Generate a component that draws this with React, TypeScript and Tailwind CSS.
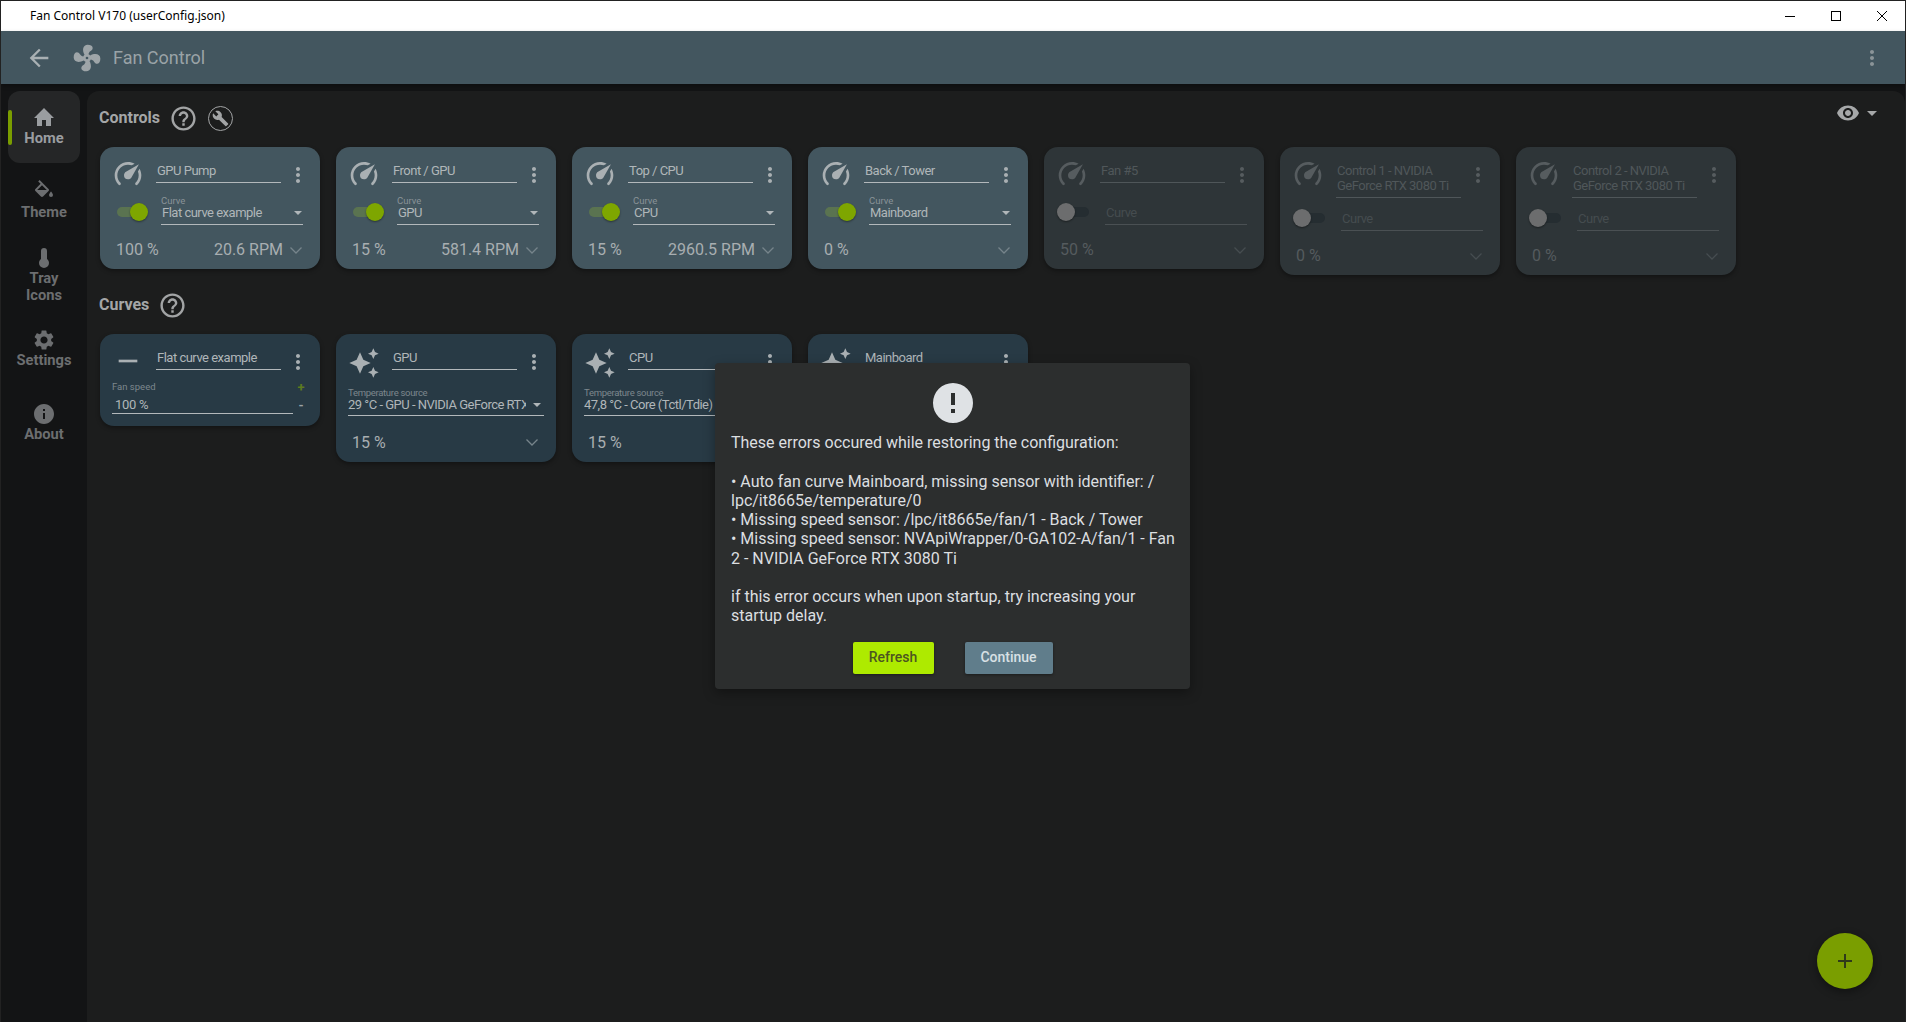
import React from 'react';
import { MdMoreVert, MdHelpOutline, MdVisibility, MdArrowBack, MdSettings, MdInfo, MdAdd } from 'react-icons/md';

const Mdi: React.FC<{ d: string; className?: string }> = ({ d, className }) => (
  <svg viewBox="0 0 24 24" fill="currentColor" className={className}>
    <path d={d} />
  </svg>
);

const GAUGE = 'M12,16A3,3 0 0,1 9,13C9,11.88 9.61,10.9 10.5,10.39L20.21,4.77L14.68,14.35C14.18,15.33 13.17,16 12,16M12,3C13.81,3 15.5,3.5 16.97,4.32L14.87,5.53C14,5.19 13,5 12,5A8,8 0 0,0 4,13C4,15.21 4.89,17.21 6.34,18.65H6.35C6.74,19.04 6.74,19.67 6.35,20.06C5.96,20.45 5.32,20.45 4.93,20.07V20.07C3.12,18.26 2,15.76 2,13A10,10 0 0,1 12,3M22,13C22,15.76 20.88,18.26 19.07,20.07V20.07C18.68,20.45 18.05,20.45 17.66,20.06C17.27,19.67 17.27,19.04 17.66,18.65V18.65C19.11,17.2 20,15.21 20,13C20,12 19.81,11 19.46,10.1L20.67,8C21.5,9.5 22,11.18 22,13Z';
const FAN = 'M12,11A1,1 0 0,0 11,12A1,1 0 0,0 12,13A1,1 0 0,0 13,12A1,1 0 0,0 12,11M12.5,2C17,2 17.11,5.57 14.75,6.75C13.76,7.24 13.32,8.29 13.13,9.22C13.61,9.42 14.03,9.73 14.35,10.13C18.05,8.13 22.03,8.92 22.03,12.5C22.03,17 18.46,17.1 17.28,14.73C16.78,13.74 15.72,13.3 14.79,13.11C14.59,13.59 14.28,14 13.88,14.34C15.87,18.03 15.08,22 11.5,22C7,22 6.91,18.42 9.27,17.24C10.25,16.75 10.69,15.71 10.89,14.79C10.4,14.59 9.97,14.27 9.65,13.87C5.96,15.85 2,15.07 2,11.5C2,7 5.56,6.89 6.74,9.26C7.24,10.25 8.29,10.68 9.22,10.87C9.41,10.39 9.73,9.97 10.14,9.65C8.15,5.96 8.94,2 12.5,2Z';
const SPARKLES = 'M19,1L17.74,3.75L15,5L17.74,6.26L19,9L20.25,6.26L23,5L20.25,3.75M9,4L6.5,9.5L1,12L6.5,14.5L9,20L11.5,14.5L17,12L11.5,9.5M19,15L17.74,17.74L15,19L17.74,20.25L19,23L20.25,20.25L23,19L20.25,17.74';
const HOME = 'M10,20V14H14V20H19V12H22L12,2L2,12H5V20H10Z';
const BUCKET = 'M19,11.5C19,11.5 17,13.67 17,15A2,2 0 0,0 19,17A2,2 0 0,0 21,15C21,13.67 19,11.5 19,11.5M5.21,10L10,5.21L14.79,10M16.56,8.94L7.62,0L6.21,1.41L8.59,3.79L3.44,8.94C2.85,9.5 2.85,10.47 3.44,11.06L8.94,16.56C9.23,16.85 9.62,17 10,17C10.38,17 10.77,16.85 11.06,16.56L16.56,11.06C17.15,10.47 17.15,9.5 16.56,8.94Z';
const THERMO = 'M17 17A5 5 0 0 1 7 17C7 15.36 7.79 13.91 9 13V5A3 3 0 0 1 15 5V13C16.21 13.91 17 15.36 17 17Z';
const WRENCH = 'M22.7,19L13.6,9.9C14.5,7.6 14,4.9 12.1,3C10.1,1 7.1,0.6 4.7,1.7L9,6L6,9L1.6,4.7C0.4,7.1 0.9,10.1 2.9,12.1C4.8,14 7.5,14.5 9.8,13.6L18.9,22.7C19.3,23.1 19.9,23.1 20.3,22.7L22.6,20.4C23.1,20 23.1,19.3 22.7,19Z';
const ALERT = 'M13,13H11V7H13M13,17H11V15H13M12,2A10,10 0 0,0 2,12A10,10 0 0,0 12,22A10,10 0 0,0 22,12A10,10 0 0,0 12,2Z';
const MINUS = 'M19,13H5V11H19V13Z';

const Caret: React.FC<{ className?: string }> = ({ className }) => (
  <svg viewBox="0 0 8 4" fill="currentColor" className={className}>
    <polygon points="0,0 8,0 4,4" />
  </svg>
);

const Chevron: React.FC<{ className?: string }> = ({ className }) => (
  <svg viewBox="0 0 12 7" fill="none" stroke="currentColor" strokeWidth="1.3" className={className}>
    <polyline points="0.5,0.5 6,6 11.5,0.5" />
  </svg>
);

const NavItem: React.FC<{ d?: string; icon?: React.ReactNode; label: React.ReactNode; active?: boolean }> = ({ d, icon, label, active }) => (
  <div className={`relative w-[72px] h-[72px] rounded-[12px] flex flex-col items-center justify-center ${active ? 'bg-[#252627] text-[#9a9da0]' : 'text-[#6c6e70]'}`}>
    {active && <div className="absolute left-0 top-[19px] w-[4px] h-[35px] rounded-[2px] bg-[#7a9d00]" />}
    {d ? <Mdi d={d} className="size-6" /> : icon}
    <div className="text-[14.7px] leading-[17.5px] font-bold text-center">{label}</div>
  </div>
);

interface ControlProps {
  name: string;
  curve?: string;
  percent: string;
  rpm?: string;
  disabled?: boolean;
  twoLine?: boolean;
}

const ControlCard: React.FC<ControlProps> = ({ name, curve, percent, rpm, disabled, twoLine }) => (
  <div className={`w-[220px] rounded-[14px] shadow-[0_2px_4px_rgba(0,0,0,0.35)] ${disabled ? 'bg-[#2e3538]' : 'bg-[#43565f]'}`}>
    <div className="flex items-start pl-[12px] pt-[11px]">
      <Mdi d={GAUGE} className={`size-8 shrink-0 ${disabled ? 'text-[#565c5f]' : 'text-[#aab0b3]'}`} />
      <div className={`ml-[12px] w-[125px] mt-[5px] pl-px pb-[4px] border-b text-[13px] tracking-[-0.5px] leading-[15px] ${disabled ? 'text-[#50575a] border-[#4f5659]' : 'text-[#b0b6b9] border-[#b3b8bb]'}`}>{name}</div>
      <div className="w-[34px] flex justify-center mt-[5px]">
        <MdMoreVert className={`size-6 ${disabled ? 'text-[#565c5f]' : 'text-[#aab0b3]'}`} />
      </div>
    </div>
    <div className={`flex items-end pl-[13px] ${twoLine ? 'h-[33px]' : 'h-[35px]'}`}>
      <div className="relative w-[35px] h-[18px] mb-[4px] shrink-0">
        <div className={`absolute left-[4px] right-[3px] top-[4px] h-[10px] rounded-full ${disabled ? 'bg-[#252d31]' : 'bg-[#5a7350]'}`} />
        <div className={`absolute top-0 size-[18px] rounded-full shadow-[0_1px_2px_rgba(0,0,0,0.4)] ${disabled ? 'left-0 bg-[#6c6d6e]' : 'right-0 bg-[#7ea600]'}`} />
      </div>
      <div className={`ml-[13px] w-[142px] border-b ${disabled ? 'border-[#4a5053]' : 'border-[#b3b8bb]'}`}>
        {!disabled && <div className="text-[9.5px] leading-[11px] text-[#8a9398] -mb-[1px]">Curve</div>}
        <div className="flex items-center pb-[4px] pl-[1px]">
          <div className={`flex-1 text-[13px] tracking-[-0.5px] leading-[15px] ${disabled ? 'text-[#454c4f]' : 'text-[#b0b6b9]'}`}>{curve ?? 'Curve'}</div>
          {!disabled && <Caret className="w-[8px] h-[4px] mr-px text-[#b0b6b9]" />}
        </div>
      </div>
    </div>
    <div className="flex items-center h-[44px] pt-[6px] pl-[16px] pr-[18px]">
      <div className={`flex-1 text-[16px] leading-[20px] ${disabled ? 'text-[#555b5e]' : 'text-[#a8aeb1]'}`}>{percent}</div>
      {rpm && <div className="text-[16px] leading-[20px] text-[#a8aeb1] mr-[7px]">{rpm}</div>}
      <Chevron className={`w-[12px] h-[7px] ${disabled ? 'text-[#464d50]' : 'text-[#76848b]'}`} />
    </div>
  </div>
);

const FlatCard: React.FC = () => (
  <div className="w-[220px] h-[92px] rounded-[14px] bg-[#283a45] shadow-[0_2px_4px_rgba(0,0,0,0.35)]">
    <div className="flex items-start pl-[12px] pt-[11px]">
      <Mdi d={MINUS} className="size-8 shrink-0 text-[#aab0b3]" />
      <div className="ml-[12px] w-[125px] mt-[5px] pl-px pb-[4px] border-b border-[#b3b8bb] text-[13px] tracking-[-0.5px] leading-[15px] text-[#b0b6b9]">Flat curve example</div>
      <div className="w-[34px] flex justify-center mt-[5px]">
        <MdMoreVert className="size-6 text-[#aab0b3]" />
      </div>
    </div>
    <div className="flex items-end pl-[12px] mt-[4px]">
      <div className="w-[181px] border-b border-[#b3b8bb]">
        <div className="text-[9.5px] leading-[11px] text-[#7d878d]">Fan speed</div>
        <div className="pl-[3px] mt-[5px] pb-px text-[13px] tracking-[-0.3px] leading-[15px] text-[#b0b6b9]">100 %</div>
      </div>
      <div className="w-[14px] ml-px flex flex-col items-center h-[33px] text-[13px] font-bold leading-[14px]">
        <div className="text-[#5d7a1f]">+</div>
        <div className="mt-[4px] text-[#9aa2a6]">-</div>
      </div>
    </div>
  </div>
);

const AutoCard: React.FC<{ name: string; source: string }> = ({ name, source }) => (
  <div className="w-[220px] h-[128px] rounded-[14px] bg-[#283a45] shadow-[0_2px_4px_rgba(0,0,0,0.35)]">
    <div className="flex items-start pl-[12px] pt-[11px]">
      <Mdi d={SPARKLES} className="size-8 mt-[2px] shrink-0 text-[#aab0b3]" />
      <div className="ml-[12px] w-[125px] mt-[5px] pl-px pb-[4px] border-b border-[#b3b8bb] text-[13px] tracking-[-0.5px] leading-[15px] text-[#b0b6b9]">{name}</div>
      <div className="w-[34px] flex justify-center mt-[5px]">
        <MdMoreVert className="size-6 text-[#aab0b3]" />
      </div>
    </div>
    <div className="ml-[12px] mt-[8px] w-[196px] border-b border-[#b3b8bb]">
      <div className="text-[9.5px] tracking-[-0.3px] leading-[11px] text-[#7d878d]">Temperature source</div>
      <div className="flex items-center pb-[3px] -mt-px">
        <div className="w-[178px] overflow-hidden whitespace-nowrap text-[13px] tracking-[-0.5px] leading-[15px] text-[#b0b6b9]">{source}</div>
        <Caret className="w-[8px] h-[4px] ml-[7px] text-[#b0b6b9]" />
      </div>
    </div>
    <div className="flex items-center h-[45px] pt-[8px] pl-[16px] pr-[18px]">
      <div className="flex-1 text-[16px] leading-[20px] text-[#a8aeb1]">15 %</div>
      <Chevron className="w-[12px] h-[7px] text-[#76848b]" />
    </div>
  </div>
);

const Heading: React.FC<{ children: React.ReactNode }> = ({ children }) => (
  <div className="flex items-center h-[30px]">{children}</div>
);

const HelpIcon: React.FC = () => <MdHelpOutline className="size-[29px] ml-[9px] text-[#a2a4a5]" />;

export default function App() {
  return (
    <div className="w-[1906px] h-[1022px] flex flex-col overflow-hidden border-x border-t border-[#222] bg-[#131415] font-[Roboto,sans-serif]">
      <div className="h-[30px] shrink-0 flex items-center bg-white text-black">
        <div className="pl-[29px] text-[12px] font-['Noto_Sans',sans-serif]">Fan Control V170 (userConfig.json)</div>
        <div className="ml-auto flex items-center">
          <div className="w-[46px] flex justify-center">
            <svg viewBox="0 0 10 10" className="size-[10px]" stroke="black" fill="none"><line x1="0" y1="5.5" x2="10" y2="5.5" /></svg>
          </div>
          <div className="w-[46px] flex justify-center">
            <svg viewBox="0 0 10 10" className="size-[10px]" stroke="black" fill="none"><rect x="0.5" y="0.5" width="9" height="9" /></svg>
          </div>
          <div className="w-[46px] flex justify-center">
            <svg viewBox="0 0 10 10" className="size-[10px]" stroke="black" fill="none"><path d="M0,0L10,10M10,0L0,10" /></svg>
          </div>
        </div>
      </div>

      <div className="relative flex-1 flex flex-col min-h-0">
        <div className="h-[53px] shrink-0 flex items-center bg-[#43565f] shadow-[0_2px_4px_rgba(0,0,0,0.3)] pl-[24px] pr-[21px]">
          <MdArrowBack className="size-[28px] text-[#a9b0b3]" />
          <Mdi d={FAN} className="size-[32px] ml-[18px] text-[#9ea5a8]" />
          <div className="ml-[10px] text-[18px] text-[#9aa3a7]">Fan Control</div>
          <MdMoreVert className="ml-auto size-6 text-[#8b9498]" />
        </div>

        <div className="flex-1 flex min-h-0">
          <div className="w-[86px] shrink-0 pl-[7px] pt-[7px] flex flex-col gap-[2px]">
            <NavItem d={HOME} label="Home" active />
            <NavItem d={BUCKET} label="Theme" />
            <NavItem d={THERMO} label={<>Tray<br />Icons</>} />
            <NavItem icon={<MdSettings className="size-6" />} label="Settings" />
            <NavItem icon={<MdInfo className="size-6" />} label="About" />
          </div>

          <div className="relative flex-1 mt-[7px] rounded-t-[12px] bg-[#1c1d1d] pl-[12px] pt-[12px]">
            <Heading>
              <span className="text-[16px] font-bold text-[#a4a6a7]">Controls</span>
              <HelpIcon />
              <div className="ml-[10px] size-[25px] rounded-full border-[1.5px] border-[#a2a4a5] flex items-center justify-center">
                <Mdi d={WRENCH} className="size-[17px] text-[#a2a4a5]" />
              </div>
              <div className="ml-auto -mt-[10px] pr-[28px] flex items-center gap-[7px] text-[#a6a8a9]">
                <MdVisibility className="size-6" />
                <Caret className="w-[10px] h-[5px]" />
              </div>
            </Heading>
            <div className="mt-[14px] ml-px flex items-start gap-[16px]">
              <ControlCard name="GPU Pump" curve="Flat curve example" percent="100 %" rpm="20.6 RPM" />
              <ControlCard name="Front / GPU" curve="GPU" percent="15 %" rpm="581.4 RPM" />
              <ControlCard name="Top / CPU" curve="CPU" percent="15 %" rpm="2960.5 RPM" />
              <ControlCard name="Back / Tower" curve="Mainboard" percent="0 %" />
              <ControlCard name="Fan #5" percent="50 %" disabled />
              <ControlCard name="Control 1 - NVIDIA GeForce RTX 3080 Ti" percent="0 %" disabled twoLine />
              <ControlCard name="Control 2 - NVIDIA GeForce RTX 3080 Ti" percent="0 %" disabled twoLine />
            </div>

            <div className="mt-[15px]">
              <Heading>
                <span className="text-[16px] font-bold text-[#a4a6a7]">Curves</span>
                <HelpIcon />
              </Heading>
            </div>
            <div className="mt-[14px] ml-px flex items-start gap-[16px]">
              <FlatCard />
              <AutoCard name="GPU" source="29 °C - GPU - NVIDIA GeForce RTX 3080 Ti" />
              <AutoCard name="CPU" source="47,8 °C - Core (Tctl/Tdie)" />
              <AutoCard name="Mainboard" source="" />
            </div>

            <div className="absolute right-[32px] bottom-[33px] size-[56px] rounded-full bg-[#7a9e00] flex items-center justify-center shadow-[0_3px_8px_rgba(0,0,0,0.4)]">
              <MdAdd className="size-[24px] text-[#2f3a1a]" />
            </div>
          </div>
        </div>

        <div className="absolute inset-0 flex items-center justify-center">
          <div className="w-[475px] h-[326px] -mt-px -ml-px rounded-[4px] bg-[#2c2e2e] shadow-[0_4px_12px_rgba(0,0,0,0.35)] pl-[16px] pt-[16px] flex flex-col">
            <Mdi d={ALERT} className="size-12 self-center -ml-[16px] text-[#dfe2e5]" />
            <div className="mt-[6px] whitespace-nowrap text-[16px] leading-[19.25px] text-[#dcdfe0]">
              These errors occured while restoring the configuration:
              <br />
              <br />
              • Auto fan curve Mainboard, missing sensor with identifier: /<br />
              lpc/it8665e/temperature/0
              <br />
              • Missing speed sensor: /lpc/it8665e/fan/1 - Back / Tower
              <br />
              • Missing speed sensor: NVApiWrapper/0-GA102-A/fan/1 - Fan<br />
              2 - NVIDIA GeForce RTX 3080 Ti
              <br />
              <br />
              if this error occurs when upon startup, try increasing your<br />
              startup delay.
            </div>
            <div className="mt-[16px] -ml-[16px] flex justify-center gap-[31px]">
              <div className="w-[81px] h-[32px] rounded-[2px] bg-[#aeea00] flex items-center justify-center text-[14px] font-medium text-[#4c5520] shadow-[0_1px_3px_rgba(0,0,0,0.4)]">Refresh</div>
              <div className="w-[88px] h-[32px] rounded-[2px] bg-[#607d8b] flex items-center justify-center text-[14px] font-medium text-[#d8e0e4] shadow-[0_1px_3px_rgba(0,0,0,0.4)]">Continue</div>
            </div>
          </div>
        </div>
      </div>
    </div>
  );
}
